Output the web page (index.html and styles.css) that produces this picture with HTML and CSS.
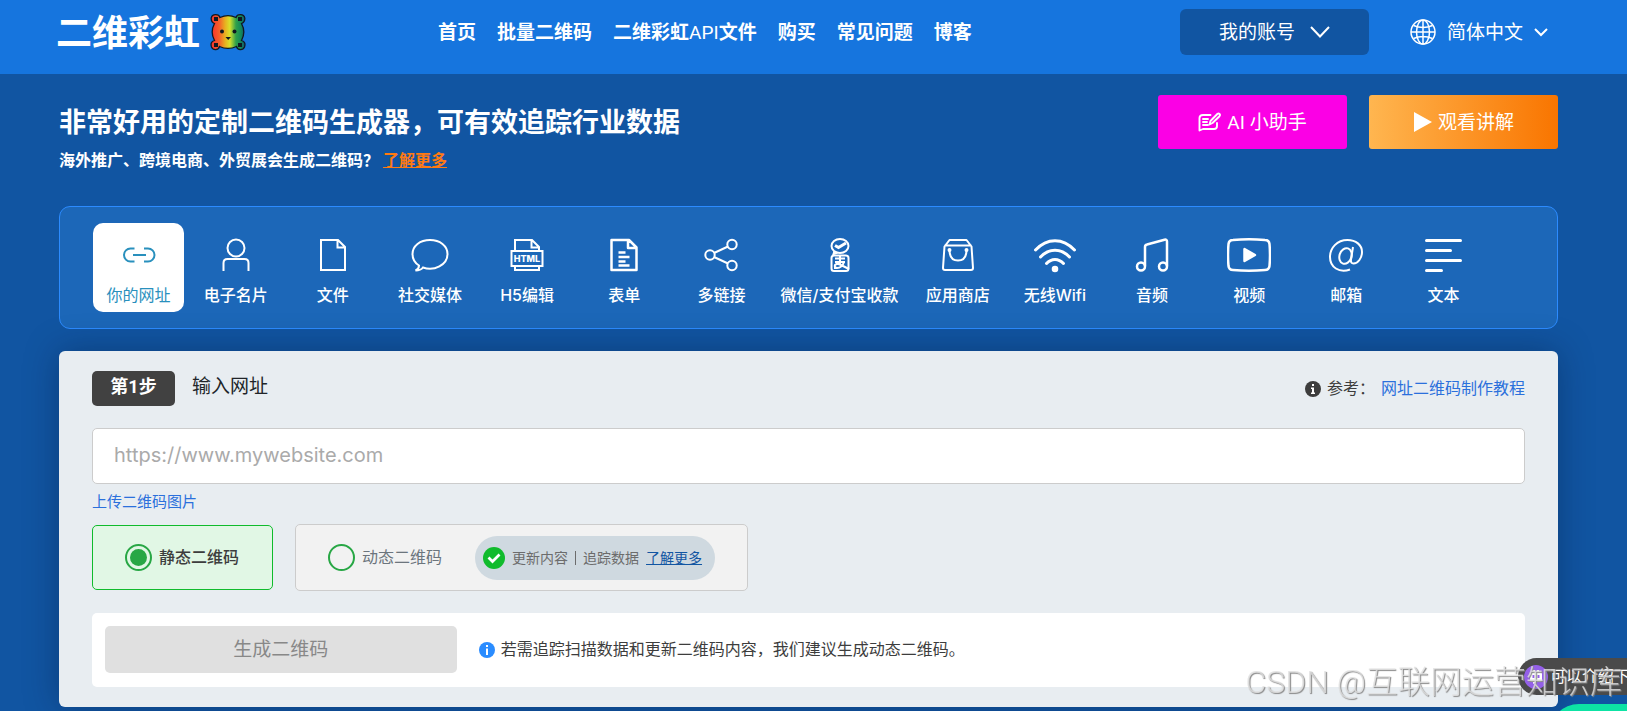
FILE: index.html
```html
<!DOCTYPE html>
<html lang="zh-CN">
<head>
<meta charset="utf-8">
<meta name="viewport" content="width=device-width, initial-scale=1">
<title>二维彩虹</title>
<link rel="stylesheet" href="styles.css">
</head>
<body>
<header class="header">
  <a class="logo" href="#">
    <span>二维彩虹</span>
    <svg class="logo-bear" viewBox="0 0 36 38">
      <defs><linearGradient id="rainbow" x1="0" x2="36" gradientUnits="userSpaceOnUse">
        <stop offset=".08" stop-color="#f5382c"/><stop offset=".26" stop-color="#f4602a"/><stop offset=".42" stop-color="#e8b020"/><stop offset=".55" stop-color="#d8e02a"/><stop offset=".72" stop-color="#2fa04a"/><stop offset=".86" stop-color="#128a5a"/><stop offset="1" stop-color="#14407a"/>
      </linearGradient></defs>
      <g fill="url(#rainbow)" stroke="#101820" stroke-width="1.3">
        <path d="M10 4.500C15 2.200 21 2.200 26 4.500C27 .5 34 .5 34.800 5C35 8.500 33 10 31.500 10.500C34.500 16 34.500 22 31.500 27.500C35 28.500 35.500 31 34.500 34C33 37.500 27.500 37.500 26.500 33.500C21 36 15 36 9.500 33.500C8.500 37.500 3 37.500 1.500 34C.5 31 1 28.500 4.500 27.500C1.500 22 1.500 16 4.500 10.500C3 10 1 8.500 1.200 5C2 .5 9 .5 10 4.500Z"/>
      </g>
      <g fill="#101820"><rect x="4" y="4" width="4" height="4"/><rect x="28" y="4" width="4" height="4"/><rect x="4" y="30" width="4" height="4"/><rect x="28" y="30" width="4" height="4"/><circle cx="12" cy="18.500" r="2"/><circle cx="24.500" cy="18.500" r="2"/><path d="M15.500 24h5.500L18.200 27z"/></g>
    </svg>
  </a>
  <nav class="nav">
    <a href="#">首页</a><a href="#">批量二维码</a><a href="#">二维彩虹<span class="nav-latin">API</span>文件</a><a href="#">购买</a><a href="#">常见问题</a><a href="#">博客</a>
  </nav>
  <button class="account" type="button"><span>我的账号</span>
    <svg width="20" height="12" viewBox="0 0 20 12" fill="none" stroke="currentColor" stroke-width="2"><path d="M1 1l9 9.500L19 1"/></svg>
  </button>
  <button class="language" type="button">
    <svg width="26" height="26" viewBox="0 0 26 26" fill="none" stroke="currentColor" stroke-width="1.500"><circle cx="13" cy="13" r="12"/><ellipse cx="13" cy="13" rx="6.500" ry="12"/><path d="M13 1v24M1 13h24M3.500 6.500Q13 10.500 22.500 6.500M3.500 19.500Q13 15.500 22.500 19.500"/></svg>
    <span>简体中文</span>
    <svg width="14" height="9" viewBox="0 0 14 9" fill="none" stroke="currentColor" stroke-width="2"><path d="M1 1l6 6 6-6"/></svg>
  </button>
</header>

<main class="main">
  <section class="hero">
    <div class="hero-text">
      <h1>非常好用的定制二维码生成器，可有效追踪行业数据</h1>
      <p>海外推广、跨境电商、外贸展会生成二维码？<a href="#">了解更多</a></p>
    </div>
    <div class="hero-actions">
      <button class="action action-ai" type="button">
        <svg width="23" height="20" viewBox="0 0 23 20" fill="none" stroke="currentColor" stroke-width="1.900" stroke-linecap="round" stroke-linejoin="round"><path d="M12.500 3H5Q1.500 3 1.500 6v12.500L5 17h11q3 0 3-3v-3"/><path d="M11.500 12.500l1-3.500 6.800-7q1.200-1 2.200 0t0 2.200l-7 6.800z"/><path d="M5 7h5M5 10h4M5 13h5"/></svg>
        <span>AI 小助手</span>
      </button>
      <button class="action action-video" type="button">
        <svg width="19" height="20" viewBox="0 0 19 20" fill="currentColor"><path d="M1 0l18 10L1 20z"/></svg>
        <span>观看讲解</span>
      </button>
    </div>
  </section>

  <nav class="types">
    <a class="type type-active" href="#"><svg viewBox="0 0 44 36"><path d="M17.500 11.500h-4a6.500 6.500 0 0 0 0 13h4M27 11.500h4a6.500 6.500 0 0 1 0 13h-4M16 18h13"/></svg>你的网址</a>
    <a class="type" href="#"><svg viewBox="0 0 44 36"><circle cx="22" cy="11" r="8.500"/><path d="M9.500 34V26q0-4 4-4h17q4 0 4 4v8"/></svg>电子名片</a>
    <a class="type" href="#"><svg viewBox="0 0 44 36"><path d="M10 3h17l7 7v23H10zM26.500 3v7.500H34"/></svg>文件</a>
    <a class="type" href="#"><svg viewBox="0 0 44 36"><path d="M22 3C12 3 4.500 9 4.500 17c0 5 2.500 9 6.500 11.500 0 2-1.200 4-3.500 5 3.500 0 6-1 7.500-3 11 4 24.500-2.500 24.500-13.500C39.500 9 32 3 22 3z"/></svg>社交媒体</a>
    <a class="type" href="#"><svg viewBox="0 0 44 36"><path d="M10 14V3h17l7 7v4M26.500 3v7.500H34M6.500 14h31v15h-31zM10 29v4h24v-4"/><text class="html-mark" x="22" y="25" text-anchor="middle">HTML</text></svg>H5编辑</a>
    <a class="type" href="#"><svg class="medium" viewBox="0 0 44 36" stroke-linejoin="round"><path d="M9.500 3H27l7.500 7.500V33h-25zM26 3v8h8.500M16.500 15.500h7M16.500 20h11M16.500 24.500h7M16.500 28.500h11"/></svg>表单</a>
    <a class="type" href="#"><svg viewBox="0 0 44 36"><circle cx="11" cy="18" r="4.700"/><circle cx="33" cy="7.500" r="4.700"/><circle cx="33" cy="28.500" r="4.700"/><path d="M15 16l14-6.500M15 20l14 6.500"/></svg>多链接</a>
    <a class="type" href="#"><svg viewBox="0 0 44 36"><ellipse cx="22" cy="9" rx="8.500" ry="7"/><path d="M16.500 14l-1 3 4-1.500"/><path class="bold" d="M17 8.500l3.500 2L28 6"/><rect x="13.500" y="18.500" width="17" height="15.500" rx="2.500"/><path d="M17 21.500h10M22 19v5M17 25h10M26 25q-2 6-7 6-3-1-2-3 2-2 6 0l8 4M21 25l3 5M18 27h4M16 31h5"/></svg>微信/支付宝收款</a>
    <a class="type" href="#"><svg viewBox="0 0 44 36" stroke-linejoin="round"><path d="M8.500 9.500L7 31q0 2 2 2h26q2 0 2-2L35.500 9.500l-5-6.500h-17zM8.500 8.500h27M13.500 13q0 10.500 8.500 10.500T30.500 13"/><circle cx="13.500" cy="13" r="1"/><circle cx="30.500" cy="13" r="1"/></svg>应用商店</a>
    <a class="type" href="#"><svg class="bold" viewBox="0 0 44 36" stroke-linecap="round"><path d="M2.500 13C14 .5 30 .5 41.500 13M7.500 20c8.500-9 20.500-9 29 0M13.500 26.500c5-5.500 12-5.500 17 0"/><circle cx="22" cy="32" r="1.800" fill="currentColor"/></svg>无线Wifi</a>
    <a class="type" href="#"><svg class="medium" viewBox="0 0 44 36" stroke-linejoin="round"><circle cx="11" cy="29.500" r="4"/><circle cx="33" cy="29.500" r="4"/><path d="M15 29V10q0-2 2-2.500L34.500 2.700q2.500-.5 2.500 1.800V29"/></svg>音频</a>
    <a class="type" href="#"><svg class="medium" viewBox="0 0 44 36"><path d="M6 3Q22 1.500 38 3q4 0 4.500 4 1 11 0 22-.5 4-4.500 4-16 1.500-32 0-4 0-4.500-4-1-11 0-22Q2 3 6 3z"/><path fill="currentColor" stroke-linejoin="round" d="M17.500 12v12l10.500-6z"/></svg>视频</a>
    <a class="type" href="#"><svg viewBox="0 0 44 36"><ellipse cx="21.500" cy="19" rx="6" ry="8" transform="rotate(18 21.500 19)"/><path d="M29 10l-2 12.500q-.5 4 2.500 4c4.500 0 8.500-5.500 8.500-11.500C38 8 32 3 23.500 3 13 3 6 11 6 20c0 10 9 16.500 20 12.500"/></svg>邮箱</a>
    <a class="type" href="#"><svg class="bold" viewBox="0 0 44 36" stroke-linecap="round"><path d="M5.500 3.500h34M5.500 13.500h24M5.500 23.500h34M5.500 33.500h15"/></svg>文本</a>
  </nav>

  <form class="card">
    <div class="step">
      <strong class="step-badge">第1步</strong>
      <label class="step-title" for="url">输入网址</label>
      <p class="reference"><svg width="16" height="16" viewBox="0 0 16 16"><circle cx="8" cy="8" r="8" fill="#3d3d3d"/><path fill="#fff" d="M7 3h2v2H7zM6 6.500h3v5h1V13H6v-1.500h1V8H6z"/></svg><span>参考：</span><a href="#">网址二维码制作教程</a></p>
    </div>
    <input class="url" id="url" type="text" placeholder="https://www.mywebsite.com">
    <a class="upload" href="#">上传二维码图片</a>
    <div class="options">
      <div class="option option-static">
        <input type="radio" name="kind" id="static" checked><label for="static">静态二维码</label>
      </div>
      <div class="option option-dynamic">
        <input type="radio" name="kind" id="dynamic"><label for="dynamic">动态二维码</label>
        <div class="benefits">
          <svg width="22" height="22" viewBox="0 0 22 22"><circle cx="11" cy="11" r="11" fill="#10bb2c"/><path d="M5.500 10.500l4 4L16.500 7.500" fill="none" stroke="#fff" stroke-width="2.700"/></svg>
          <span>更新内容</span><i class="divider"></i><span>追踪数据</span><a href="#">了解更多</a>
        </div>
      </div>
    </div>
    <div class="submit">
      <button class="generate" type="button" disabled>生成二维码</button>
      <svg width="16" height="16" viewBox="0 0 16 16"><circle cx="8" cy="8" r="8" fill="#2a8cff"/><path fill="#fff" d="M7 3h2v2H7zM7 6.500h2V13H7z"/></svg>
      <p>若需追踪扫描数据和更新二维码内容，我们建议生成动态二维码。</p>
    </div>
  </form>
</main>

<aside class="chat"><svg width="24" height="24" viewBox="0 0 24 24"><circle cx="12" cy="12" r="12" fill="#9460e8"/><path fill="#fff" d="M6 9q0-2 2-2h1V5h2v2h2V5h2v2h1q2 0 2 2v6q0 2-2 2h-4l-3 2v-2H8q-2 0-2-2z"/><path stroke="#9460e8" stroke-width="2" d="M9.500 10v3M14.500 10v3"/></svg><span>可以介绍下</span></aside>
<div class="chat-launcher"></div>
<div class="watermark">CSDN @互联网运营知识库</div>
</body>
</html>
```
FILE: styles.css
```css
* { box-sizing: border-box; }
body {
  margin: 0;
  min-height: 100vh;
  overflow: hidden;
  background: #1155a2;
  color: #fff;
  font: 16px/24px Roboto, "Noto Sans CJK SC", sans-serif;
}
h1, p { margin: 0; }
a { color: inherit; text-decoration: none; }
button { font-family: inherit; color: inherit; border: 0; padding: 0; background: none; }

.header {
  display: flex;
  align-items: flex-start;
  height: 74px;
  padding: 9px 79px 0 56px;
  background: #1675de;
}
.logo { display: flex; align-items: center; gap: 10px; height: 46px; margin-right: 192px; font-size: 36px; }
.logo span { line-height: 46px; padding-top: 3px; font-weight: 700; }
.logo-bear { width: 36px; height: 38px; }
.nav { display: flex; gap: 21px; line-height: 48px; font-size: 19px; font-weight: 700; }
.nav-latin { font-weight: 400; }
.account {
  display: flex; align-items: center; justify-content: center; gap: 15px;
  width: 189px; height: 46px; margin-left: auto;
  border-radius: 6px; background: #1155a2; font-size: 19px;
}
.language { display: flex; align-items: center; gap: 11px; height: 46px; margin-left: 41px; font-size: 19px; }
.account span, .language span, .action span { padding-bottom: 3px; }

.main { padding: 21px 69px 4px 59px; }
.hero { display: flex; justify-content: space-between; }
.hero-text { padding-top: 10px; }
.hero h1 { font-size: 27px; line-height: 36px; font-weight: 700; }
.hero p { margin-top: 8px; line-height: 24px; font-weight: 700; }
.hero p a { margin-left: 4px; color: #ff7a12; text-decoration: underline; }
.hero-actions { display: flex; gap: 22px; }
.action {
  display: flex; align-items: center; justify-content: center; gap: 6px;
  width: 189px; height: 54px; border-radius: 3px; font-size: 19px;
}
.action-ai { background: #fb00e5; }
.action-video { background: linear-gradient(90deg, #ffb650, #f97500); }

.types {
  display: grid;
  grid-template-columns: repeat(7, 91fr) 133fr repeat(6, 91fr);
  gap: 6px;
  margin-top: 33px;
  padding: 16px 68px 16px 33px;
  border: 1px solid #2c8bff;
  border-radius: 11px;
  background: #1c67b8;
}
.type {
  display: flex; flex-direction: column; align-items: center; gap: 10px;
  height: 89px; padding-top: 14px; border-radius: 10px;
  white-space: nowrap; font-family: Inter, "Noto Sans CJK SC", sans-serif; font-weight: 500;
}
.type svg { width: 44px; height: 36px; fill: none; stroke: currentColor; stroke-width: 2; }
.type .medium { stroke-width: 2.5; }
.type .bold { stroke-width: 3; }
.type-active { background: #fff; color: #2990bd; font-weight: 400; }
.html-mark { font: 800 9px Inter, sans-serif; fill: currentColor; stroke: none; }

.card {
  margin-top: 22px;
  padding: 20px 33px;
  border-radius: 6px;
  background: #e8edf1;
  color: #3d3d3d;
  box-shadow: 0 0 34px rgba(0, 20, 50, .35);
}
.step { display: flex; align-items: center; height: 35px; }
.step-badge { width: 83px; height: 35px; border-radius: 5px; background: #414141; color: #fff; font-size: 18px; line-height: 31px; text-align: center; }
.step-title { margin-left: 17px; padding-bottom: 3px; color: #212529; font-size: 19px; }
.reference { display: flex; align-items: center; gap: 6px; margin-left: auto; }
.reference a { color: #2b70dc; }
.url {
  display: block; width: 100%; height: 56px; margin-top: 22px; padding: 0 21px 2px;
  border: 1px solid #ccc; border-radius: 5px; background: #fff;
  font: 20px Inter, sans-serif;
}
.url::placeholder { color: #aaa; opacity: 1; }
.upload { display: block; width: max-content; margin-top: 6px; color: #2b70dc; font-size: 15px; }
.options { display: flex; align-items: center; gap: 22px; margin-top: 10px; }
.option { display: flex; align-items: center; gap: 7px; border: 1px solid #ccc; border-radius: 5px; }
.option-static { height: 65px; padding: 0 33px 0 32px; border-color: #10bb2c; background: #e1f7e5; font-weight: 500; }
.option-dynamic { height: 67px; padding: 0 32px; background: #f2f2f2; color: #6c757d; }
.option input {
  appearance: none; width: 27px; height: 27px; margin: 0;
  border: 2px solid #28a745; border-radius: 50%;
}
.option input:checked { padding: 3px; background: #28a745 content-box; }
.benefits { display: flex; align-items: center; gap: 7px; height: 44px; margin-left: 26px; padding: 0 13px 0 8px; border-radius: 22px; background: #cfd9e0; color: #6c6c6c; font-size: 14px; }
.benefits a { color: #1155a2; text-decoration: underline; }
.divider { width: 1px; height: 14px; background: #6c6c6c; }
.submit { display: flex; align-items: center; margin-top: 22px; padding: 13px 13px 14px; height: 74px; border-radius: 5px; background: #fff; }
.generate { width: 25%; height: 47px; margin-right: 22px; padding-bottom: 4px; border-radius: 5px; background: #e0e0e0; color: #888; font-size: 19px; }
.submit p { margin-left: 6px; }

.chat {
  position: fixed; right: 0; bottom: 16px;
  display: flex; align-items: center; gap: 2px;
  width: 109px; height: 37px; padding-left: 6px; overflow: hidden;
  border-radius: 19px 0 0 19px; background: #4a4a4a; white-space: nowrap;
}
.chat svg, .chat span { flex: none; }
.chat-launcher { position: fixed; right: 0; bottom: -53px; width: 78px; height: 60px; border-radius: 30px 0 0 30px; background: #0de3a4; }
.watermark {
  position: fixed; right: 5px; bottom: 9px;
  color: rgba(225, 225, 225, .8); text-shadow: 1px 1px 1px #888;
  font: 300 32px/40px Roboto, "Noto Sans CJK SC", sans-serif;
}
```
